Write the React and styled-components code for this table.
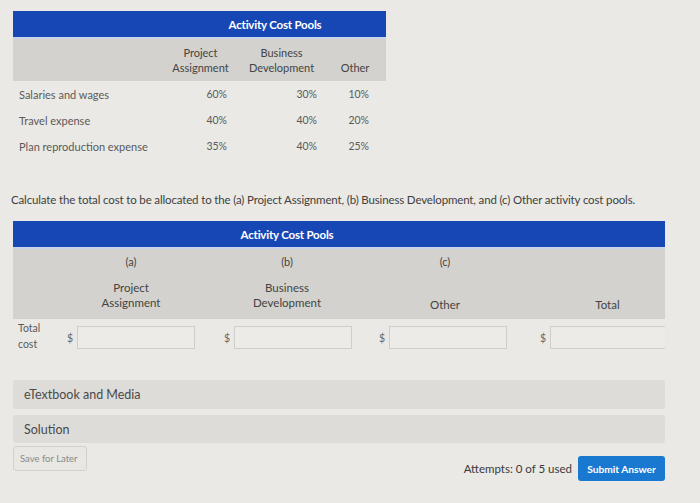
import React from "react";
import styled, { createGlobalStyle } from "styled-components";

const GlobalStyle = createGlobalStyle`
  html, body {
    margin: 0;
    padding: 0;
    background: #eae9e5;
  }
  body {
    font-family: Lato, "Open Sans", sans-serif;
    color: #4a4a4a;
    width: 700px;
    height: 503px;
    overflow: hidden;
  }
`;

const rates = [
  { label: "Salaries and wages", pa: "60%", bd: "30%", other: "10%" },
  { label: "Travel expense", pa: "40%", bd: "40%", other: "20%" },
  { label: "Plan reproduction expense", pa: "35%", bd: "40%", other: "25%" },
];

const pools = [
  { key: "(a)", name: ["Project", "Assignment"], shift: -9 },
  { key: "(b)", name: ["Business", "Development"], shift: -9 },
  { key: "(c)", name: ["Other"], shift: -7 },
];

const cells = [
  { id: "a", pad: 5 },
  { id: "b", pad: 6 },
  { id: "c", pad: 5 },
  { id: "t", pad: 10, last: true },
];

export default function App() {
  return (
    <Page>
      <GlobalStyle />
      <RateTable>
        <BlueBar $cols="151px 222px">
          <span />
          <BarTitle>Activity Cost Pools</BarTitle>
        </BlueBar>
        <RateHead>
          <span />
          <HeadCell>Project<br />Assignment</HeadCell>
          <HeadCell>Business<br />Development</HeadCell>
          <HeadCell $shift={-3}>Other</HeadCell>
        </RateHead>
        {rates.map((r) => (
          <RateRow key={r.label}>
            <RowLabel>{r.label}</RowLabel>
            <Pct $pad={6}>{r.pa}</Pct>
            <Pct $pad={13}>{r.bd}</Pct>
            <Pct $pad={17}>{r.other}</Pct>
          </RateRow>
        ))}
      </RateTable>

      <Prompt>
        Calculate the total cost to be allocated to the (a) Project Assignment, (b) Business Development, and (c) Other activity cost pools.
      </Prompt>

      <AnswerTable>
        <BlueBar $cols="49px 450px 153px">
          <span />
          <BarTitle>Activity Cost Pools</BarTitle>
          <span />
        </BlueBar>
        <AnswerHead>
          <span />
          {pools.map((p) => (
            <PoolHead key={p.key} $shift={p.shift}>
              <PoolKey>{p.key}</PoolKey>
              <PoolName $single={p.name.length === 1}>
                {p.name.map((n, i) => (
                  <React.Fragment key={n}>
                    {i > 0 && <br />}
                    {n}
                  </React.Fragment>
                ))}
              </PoolName>
            </PoolHead>
          ))}
          <PoolHead $shift={10}>
            <PoolName $single>Total</PoolName>
          </PoolHead>
        </AnswerHead>
        <AnswerRow>
          <TotalLabel>Total<br />cost</TotalLabel>
          {cells.map((c) => (
            <MoneyCell key={c.id} $pad={c.pad}>
              <Dollar>$</Dollar>
              <MoneyInput type="text" $last={c.last} />
            </MoneyCell>
          ))}
        </AnswerRow>
      </AnswerTable>

      <Panels>
        <Panel $h={29}>eTextbook and Media</Panel>
        <Panel $h={28}>Solution</Panel>
      </Panels>

      <Footer>
        <SaveButton>Save for Later</SaveButton>
        <FooterRight>
          <Attempts>Attempts: 0 of 5 used</Attempts>
          <SubmitButton>Submit Answer</SubmitButton>
        </FooterRight>
      </Footer>
    </Page>
  );
}

const Page = styled.div`
  padding: 11px 35px 0 13px;
  display: flex;
  flex-direction: column;
`;

const RateTable = styled.div`
  width: 373px;
  display: flex;
  flex-direction: column;
`;

const BlueBar = styled.div`
  display: grid;
  grid-template-columns: ${(p) => p.$cols};
  height: 26px;
  align-items: center;
  background: #1747b5;
  border-bottom: 2px solid #c9d4ea;
`;

const BarTitle = styled.div`
  text-align: center;
  color: #fff;
  font-weight: 700;
  font-size: 11.5px;
  letter-spacing: -0.2px;
`;

const RateHead = styled.div`
  display: grid;
  grid-template-columns: 155px 65px 97px 56px;
  height: 42px;
  align-items: end;
  padding-bottom: 6px;
  box-sizing: border-box;
  background: #d3d2ce;
`;

const HeadCell = styled.div`
  position: relative;
  left: ${(p) => p.$shift || 0}px;
  text-align: center;
  font-size: 11px;
  line-height: 15px;
  color: #444;
`;

const RateRow = styled.div`
  display: grid;
  grid-template-columns: 155px 65px 97px 56px;
  height: 26px;
  align-items: center;
  font-size: 11px;
  color: #5a5a5a;
`;

const RowLabel = styled.div`
  padding-left: 6px;
`;

const Pct = styled.div`
  text-align: right;
  padding-right: ${(p) => p.$pad}px;
  font-size: 10.5px;
`;

const Prompt = styled.p`
  margin: 34px 0 0 -2px;
  font-size: 11.5px;
  color: #3f3f3f;
  white-space: nowrap;
  letter-spacing: -0.15px;
`;

const AnswerTable = styled.div`
  margin-top: 15px;
  width: 652px;
  display: flex;
  flex-direction: column;
`;

const AnswerHead = styled.div`
  display: grid;
  grid-template-columns: 49px repeat(3, 156px) 135px;
  height: 70px;
  background: #d3d2ce;
`;

const PoolHead = styled.div`
  position: relative;
  left: ${(p) => p.$shift}px;
  display: flex;
  flex-direction: column;
  align-items: center;
  justify-content: space-between;
  padding: 6px 0 9px;
  text-align: center;
  font-size: 11px;
  color: #444;
  & > :only-child {
    margin-top: auto;
  }
`;

const PoolKey = styled.div``;

const PoolName = styled.div`
  font-size: 11.5px;
  line-height: 15px;
  margin-bottom: ${(p) => (p.$single ? -2 : 0)}px;
`;

const AnswerRow = styled.div`
  display: grid;
  grid-template-columns: 49px repeat(3, 156px) 135px;
  padding-top: 1px;
  align-items: start;
`;

const TotalLabel = styled.div`
  padding-left: 5px;
  font-size: 10.5px;
  line-height: 16px;
  color: #5a5a5a;
`;

const MoneyCell = styled.div`
  display: flex;
  align-items: center;
  gap: 4px;
  margin-top: 6px;
  padding-left: ${(p) => p.$pad}px;
`;

const Dollar = styled.span`
  width: 6px;
  font-size: 10.5px;
  color: #666;
`;

const MoneyInput = styled.input`
  width: ${(p) => (p.$last ? 115 : 118)}px;
  height: 23px;
  box-sizing: border-box;
  background: #ecebe8;
  border: 1px solid #cfcecb;
  border-right: ${(p) => (p.$last ? "none" : "1px solid #cfcecb")};
  outline: none;
  margin: 0;
`;

const Panels = styled.div`
  margin-top: 28px;
  width: 652px;
  display: flex;
  flex-direction: column;
  gap: 6px;
`;

const Panel = styled.div`
  height: ${(p) => p.$h}px;
  display: flex;
  align-items: center;
  padding-left: 11px;
  background: #dddcd8;
  border-radius: 3px;
  font-size: 12.5px;
  color: #4a4a4a;
`;

const Footer = styled.div`
  width: 652px;
  display: flex;
  justify-content: space-between;
  align-items: flex-start;
  margin-top: 3px;
`;

const SaveButton = styled.button`
  width: 74px;
  height: 25px;
  background: #e8e7e3;
  border: 1px solid #d2d1cd;
  border-radius: 3px;
  font-family: Lato, sans-serif;
  font-size: 9.5px;
  color: #8a8a8a;
  text-align: left;
  padding: 0 0 0 6px;
`;

const FooterRight = styled.div`
  display: flex;
  align-items: center;
  gap: 6px;
  margin-top: 10px;
`;

const Attempts = styled.span`
  font-size: 11.5px;
  color: #3a3a3a;
`;

const SubmitButton = styled.button`
  width: 87px;
  height: 25px;
  background: #1978d0;
  border: none;
  border-radius: 3px;
  color: #fff;
  font-family: Lato, sans-serif;
  font-weight: 700;
  font-size: 10.2px;
  padding: 0;
`;
